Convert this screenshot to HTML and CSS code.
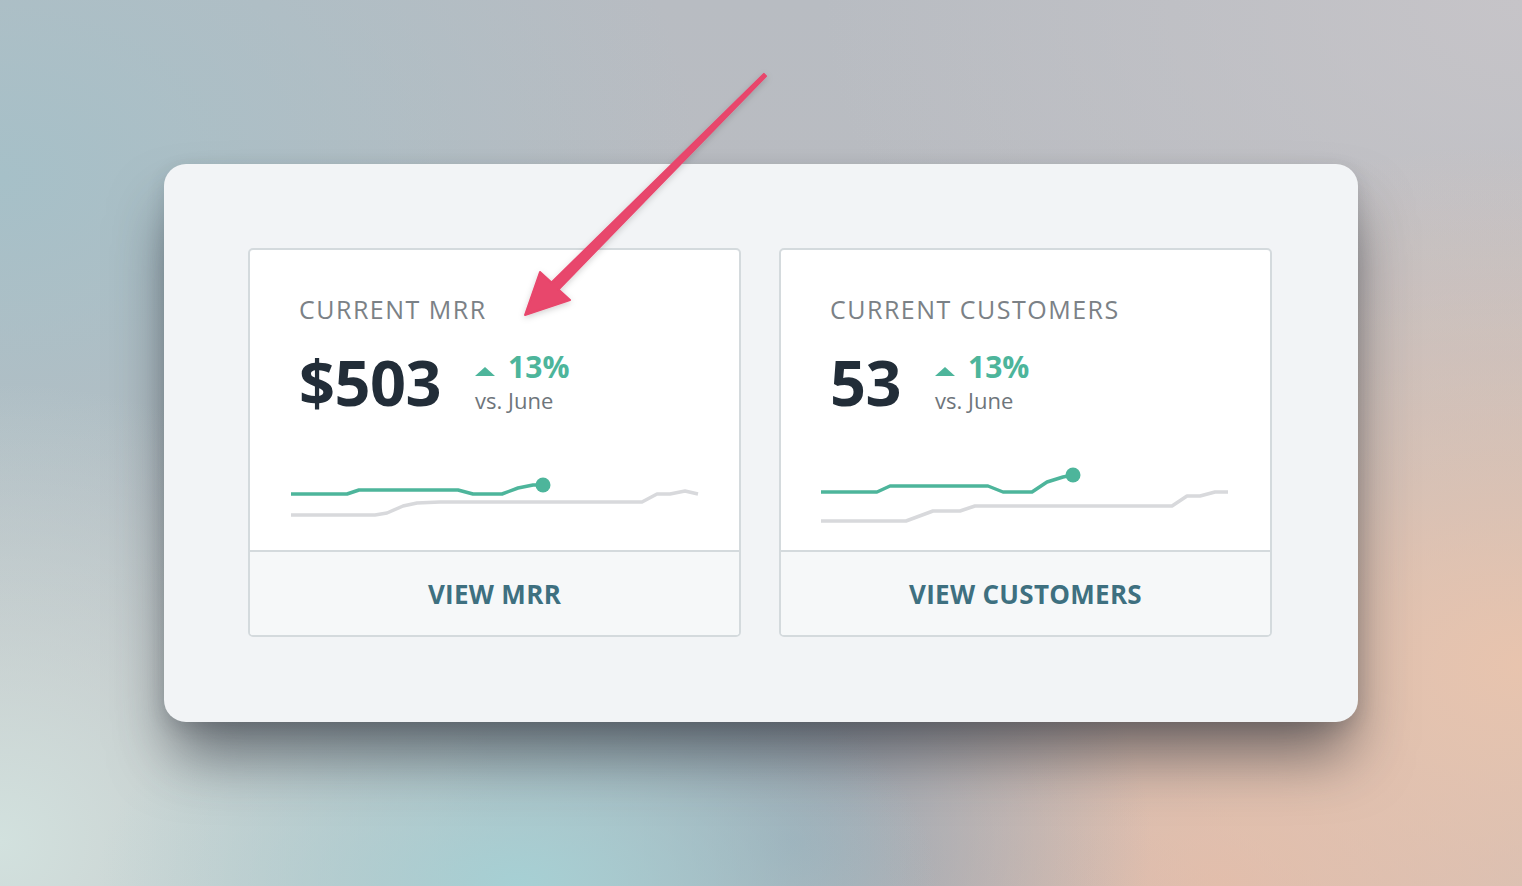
FILE: index.html
```html
<!DOCTYPE html>
<html lang="en">
<head>
<meta charset="utf-8">
<title>Metrics</title>
<link rel="stylesheet" href="styles.css">
</head>
<body>
<div class="panel">
  <div class="card">
    <div class="card-body">
      <div class="label">CURRENT MRR</div>
      <div class="stat-row">
        <div class="value">$503</div>
        <div class="delta">
          <div class="pct"><span class="tri"></span>13%</div>
          <div class="vs">vs. June</div>
        </div>
      </div>
      <svg class="spark" width="430" height="62" viewBox="0 0 430 62">
        <polyline class="gray" points="7,48 91,48 103,46 119,39 133,36 156,35 358,35 373,27 386,27 401,24 414,27"/>
        <polyline class="green" points="7,27 63,27 75,23 174,23 189,27 218,27 234,21 249,18 259,18"/>
        <circle class="dot" cx="259" cy="18" r="7.5"/>
      </svg>
    </div>
    <div class="card-foot">VIEW MRR</div>
  </div>
  <div class="card">
    <div class="card-body">
      <div class="label">CURRENT CUSTOMERS</div>
      <div class="stat-row">
        <div class="value">53</div>
        <div class="delta">
          <div class="pct"><span class="tri"></span>13%</div>
          <div class="vs">vs. June</div>
        </div>
      </div>
      <svg class="spark" width="430" height="62" viewBox="0 0 430 62">
        <polyline class="gray" points="6,54 91,54 118,44 145,44 160,39 357,39 372,29 385,29 400,25 413,25"/>
        <polyline class="green" points="6,25 62,25 75,19 173,19 188,25 217,25 232,15 248,10 258,8"/>
        <circle class="dot" cx="258" cy="8" r="7.5"/>
      </svg>
    </div>
    <div class="card-foot">VIEW CUSTOMERS</div>
  </div>
</div>
<svg class="arrow" width="1522" height="886" viewBox="0 0 1522 886">
  <defs>
    <filter id="sh" x="-20%" y="-20%" width="140%" height="140%">
      <feDropShadow dx="0" dy="2" stdDeviation="3" flood-color="#000" flood-opacity="0.18"/>
    </filter>
  </defs>
  <polygon filter="url(#sh)" points="763.9,73.9 766.1,76.1 558.5,289.5 570,300 525,315 540,272 551.5,282.5" fill="#e8466c" stroke="#e8466c" stroke-width="2" stroke-linejoin="round"/>
</svg>
</body>
</html>
```

FILE: styles.css
```css
html, body {
  margin: 0;
  padding: 0;
}
body {
  width: 1522px;
  height: 886px;
  box-sizing: border-box;
  padding: 164px;
  overflow: hidden;
  position: relative;
  font-family: "Open Sans", "Liberation Sans", sans-serif;
  background:
    radial-gradient(ellipse 420px 260px at 34% 100%, rgba(166,208,212,1) 0%, rgba(166,208,212,0) 100%),
    radial-gradient(ellipse 360px 300px at 52% 95%, rgba(150,165,178,0.9) 0%, rgba(150,165,178,0) 100%),
    radial-gradient(ellipse 700px 520px at 100% 75%, rgba(232,196,174,1) 0%, rgba(232,196,174,0) 100%),
    radial-gradient(ellipse 520px 420px at 80% 100%, rgba(222,186,170,1) 0%, rgba(222,186,170,0) 100%),
    radial-gradient(ellipse 500px 460px at 0% 95%, rgba(210,225,222,1) 0%, rgba(210,225,222,0) 100%),
    radial-gradient(ellipse 700px 520px at 0% 20%, rgba(166,192,200,1) 0%, rgba(166,192,200,0) 100%),
    radial-gradient(ellipse 700px 500px at 100% 0%, rgba(198,196,200,1) 0%, rgba(198,196,200,0) 100%),
    linear-gradient(180deg, #b8bcc2 0%, #bfbdc0 100%);
}
.panel {
  display: flex;
  gap: 38px;
  padding: 84px 86px 85px 84px;
  background: #f2f4f6;
  border-radius: 22px;
  box-shadow: 0 40px 60px -8px rgba(35, 40, 50, 0.6), 0 6px 18px rgba(40, 45, 55, 0.15);
}
.card {
  flex: 1;
  height: 389px;
  box-sizing: border-box;
  display: flex;
  flex-direction: column;
  background: #fff;
  border: 2px solid #d4dadd;
  border-radius: 5px;
  overflow: hidden;
}
.card-body {
  flex: 1;
  padding: 44px 0 0 49px;
}
.label {
  font-size: 25px;
  line-height: 30px;
  letter-spacing: 1.5px;
  color: #7b8186;
}
.stat-row {
  display: flex;
  align-items: flex-start;
  gap: 32px;
  margin-top: 26px;
}
.value {
  font-size: 63px;
  line-height: 63px;
  font-weight: 700;
  color: #222d38;
  letter-spacing: -0.5px;
}
.delta {
  margin-top: 2px;
}
.pct {
  display: flex;
  align-items: center;
  font-size: 30px;
  line-height: 30px;
  font-weight: 700;
  color: #4db59b;
}
.tri {
  width: 0;
  height: 0;
  border-left: 10px solid transparent;
  border-right: 10px solid transparent;
  border-bottom: 9px solid #4db59b;
  margin-right: 13px;
  margin-top: 8px;
  margin-left: 2px;
}
.vs {
  font-size: 22px;
  line-height: 30px;
  color: #6e757b;
  margin-top: 3px;
  margin-left: 2px;
}
.spark {
  display: block;
  margin: 52px 0 0 -15px;
}
.spark polyline {
  fill: none;
  stroke-width: 3.5;
  stroke-linejoin: round;
  stroke-linecap: butt;
}
.spark .gray {
  stroke: #d8d9dc;
}
.spark .green {
  stroke: #4db59b;
}
.spark .dot {
  fill: #4db59b;
}
.card-foot {
  height: 83px;
  flex: none;
  display: flex;
  align-items: center;
  justify-content: center;
  border-top: 2px solid #d4dadd;
  background: #f6f8f9;
  font-size: 26px;
  font-weight: 700;
  letter-spacing: 0.3px;
  color: #3e7080;
}
.arrow {
  position: absolute;
  left: 0;
  top: 0;
  pointer-events: none;
}
```
